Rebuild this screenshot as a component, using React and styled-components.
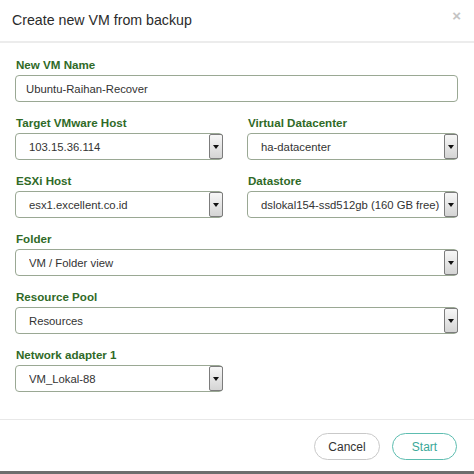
import React from 'react';
import styled, { createGlobalStyle } from 'styled-components';

const GlobalStyle = createGlobalStyle`
  body {
    margin: 0;
    background: #ffffff;
    font-family: "Liberation Sans", Arial, sans-serif;
  }
`;

const Modal = styled.div`
  width: 474px;
  height: 474px;
  box-sizing: border-box;
  background: #fff;
  border-bottom: 3px solid #6d6d6d;
  display: flex;
  flex-direction: column;
`;

const Header = styled.div`
  height: 43px;
  box-sizing: border-box;
  border-bottom: 2px solid #ececec;
  display: flex;
  align-items: center;
  justify-content: space-between;
  padding: 0 13px 2px 12px;
`;

const Title = styled.h4`
  margin: 0;
  font-size: 14.2px;
  font-weight: normal;
  color: #2b2b2b;
`;

const Close = styled.span`
  font-size: 15px;
  font-weight: bold;
  color: #c4c4c4;
  line-height: 1;
  margin-top: -8px;
`;

const Body = styled.div`
  padding: 14px 16px 0 15px;
  display: grid;
  grid-template-columns: 208px minmax(0, 1fr);
  align-content: start;
  column-gap: 24px;
  row-gap: 13px;
  flex: 1;
`;

const Group = styled.div`
  grid-column: ${p => (p.$wide ? '1 / 3' : 'auto')};
  display: flex;
  flex-direction: column;
  min-width: 0;
`;

const Label = styled.label`
  font-size: 11.6px;
  font-weight: bold;
  color: #2f6a27;
  line-height: 16px;
  margin-bottom: 2px;
  padding-left: 1px;
`;

const TextBox = styled.div`
  height: 27px;
  box-sizing: border-box;
  border: 1px solid #9aa894;
  border-radius: 4px;
  font-size: 11.3px;
  color: #333;
  display: flex;
  align-items: center;
  padding-left: 10px;
`;

const SelectBox = styled(TextBox)`
  padding-left: 13px;
  padding-right: 0;
`;

const Value = styled.span`
  flex: 1;
  white-space: nowrap;
  overflow: hidden;
`;

const Arrow = styled.span`
  width: 14px;
  height: 25px;
  flex-shrink: 0;
  box-sizing: border-box;
  border: 1px solid #7c7c7c;
  border-radius: 2px;
  margin-right: -1px;
  background: linear-gradient(#f7f7f7, #d4d4d4);
  display: flex;
  align-items: center;
  justify-content: center;

  &::after {
    content: '';
    border-left: 3px solid transparent;
    border-right: 3px solid transparent;
    border-top: 4px solid #111;
  }
`;

const Footer = styled.div`
  border-top: 1px solid #e8e8e8;
  height: 51px;
  display: flex;
  align-items: center;
  justify-content: flex-end;
  gap: 12px;
  padding-right: 17px;
`;

const Pill = styled.button`
  height: 27px;
  width: ${p => p.$w}px;
  border-radius: 14px;
  background: #fff;
  font-family: inherit;
  font-size: 12px;
  border: 1px solid ${p => (p.$primary ? '#5dbdb0' : '#c9c9c9')};
  color: ${p => (p.$primary ? '#3aa898' : '#333')};
  padding: 0;
  margin-top: 2px;
`;

const Select = ({ value }) => (
  <SelectBox>
    <Value>{value}</Value>
    <Arrow />
  </SelectBox>
);

export default function App() {
  return (
    <>
      <GlobalStyle />
      <Modal>
        <Header>
          <Title>Create new VM from backup</Title>
          <Close>×</Close>
        </Header>
        <Body>
          <Group $wide>
            <Label>New VM Name</Label>
            <TextBox>Ubuntu-Raihan-Recover</TextBox>
          </Group>
          <Group>
            <Label>Target VMware Host</Label>
            <Select value="103.15.36.114" />
          </Group>
          <Group>
            <Label>Virtual Datacenter</Label>
            <Select value="ha-datacenter" />
          </Group>
          <Group>
            <Label>ESXi Host</Label>
            <Select value="esx1.excellent.co.id" />
          </Group>
          <Group>
            <Label>Datastore</Label>
            <Select value="dslokal154-ssd512gb (160 GB free)" />
          </Group>
          <Group $wide>
            <Label>Folder</Label>
            <Select value="VM / Folder view" />
          </Group>
          <Group $wide>
            <Label>Resource Pool</Label>
            <Select value="Resources" />
          </Group>
          <Group>
            <Label>Network adapter 1</Label>
            <Select value="VM_Lokal-88" />
          </Group>
        </Body>
        <Footer>
          <Pill $w={66}>Cancel</Pill>
          <Pill $w={65} $primary>Start</Pill>
        </Footer>
      </Modal>
    </>
  );
}
